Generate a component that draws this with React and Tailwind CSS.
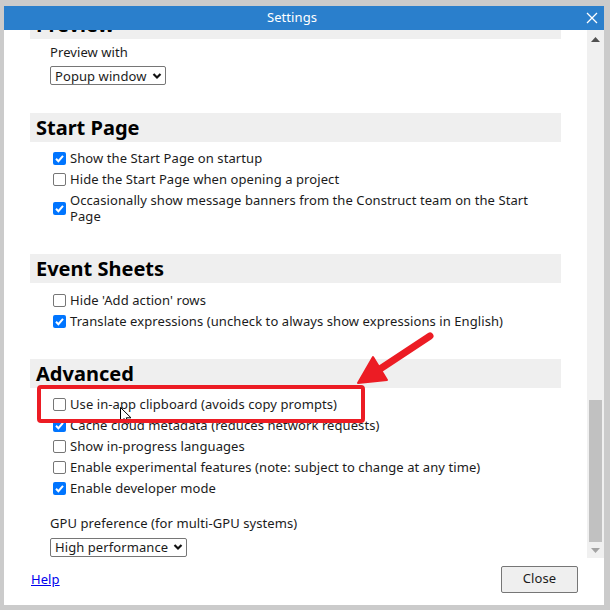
import React from "react";

const font = { fontFamily: '"Noto Sans", "Open Sans", sans-serif' };

function Box({ checked }) {
  if (checked) {
    return (
      <span className="w-[13px] h-[13px] rounded-[2px] bg-[#0075ff] flex items-center justify-center shrink-0">
        <svg width="11" height="11" viewBox="0 0 11 11">
          <path d="M2 5.8 L4.4 8.2 L9 2.8" fill="none" stroke="white" strokeWidth="2" />
        </svg>
      </span>
    );
  }
  return <span className="w-[13px] h-[13px] rounded-[2px] border border-[#767676] bg-white shrink-0" />;
}

function Item({ checked, children }) {
  return (
    <div className="flex items-center gap-[4px] pl-[23px] py-[2.5px] leading-[16px] pr-[20px]">
      <Box checked={checked} />
      <span>{children}</span>
    </div>
  );
}

function Header({ children, className }) {
  return (
    <div className={"h-[29px] bg-[#efefef] pl-[6px] flex items-center text-[20px] font-bold tracking-normal text-black " + className}>
      {children}
    </div>
  );
}

function Select({ value, width }) {
  return (
    <div
      className="ml-[20px] h-[19px] border border-[#767676] rounded-[2px] flex items-center justify-between pl-[4px] pr-[3px] bg-white"
      style={{ width }}
    >
      <span className="leading-[16px]">{value}</span>
      <svg width="10" height="10" viewBox="0 0 10 10">
        <path d="M1.5 3 L5 6.5 L8.5 3" fill="none" stroke="#111" strokeWidth="2.2" />
      </svg>
    </div>
  );
}

export default function App() {
  return (
    <div className="w-[610px] h-[610px] bg-[#cbcbcb] pt-[6px] pl-[4px] relative text-[13px] tracking-[0.08px] text-[#1b1b1b]" style={font}>
      <div className="w-[600px] h-[599px] bg-white flex flex-col">
        <div className="h-[24px] bg-[#2a7fcc] text-white flex items-center justify-center pr-[24px] relative">
          <span className="text-[13px]">Settings</span>
          <svg className="absolute right-[6px] top-[6px]" width="12" height="12" viewBox="0 0 12 12">
            <path d="M1 1 L11 11 M11 1 L1 11" stroke="white" strokeWidth="1.3" />
          </svg>
        </div>

        <div className="h-[528px] flex">
          <div className="w-[583px] overflow-hidden px-[26px]">
            <div className="mt-[-20px]">
              <Header>Preview</Header>
              <div className="mt-[4px] pl-[20px] leading-[18px]">Preview with</div>
              <div className="mt-[5px]">
                <Select value="Popup window" width="116px" />
              </div>

              <Header className="mt-[28px]">Start Page</Header>
              <div className="mt-[5.5px]">
                <Item checked>Show the Start Page on startup</Item>
                <Item>Hide the Start Page when opening a project</Item>
                <Item checked>
                  Occasionally show message banners from the Construct team on the Start Page
                </Item>
              </div>

              <Header className="mt-[27.5px]">Event Sheets</Header>
              <div className="mt-[6.5px]">
                <Item>Hide 'Add action' rows</Item>
                <Item checked>Translate expressions (uncheck to always show expressions in English)</Item>
              </div>

              <Header className="mt-[27.5px]">Advanced</Header>
              <div className="mt-[5.5px]">
                <Item>Use in-app clipboard (avoids copy prompts)</Item>
                <Item checked>Cache cloud metadata (reduces network requests)</Item>
                <Item>Show in-progress languages</Item>
                <Item>Enable experimental features (note: subject to change at any time)</Item>
                <Item checked>Enable developer mode</Item>
              </div>

              <div className="mt-[15.5px] pl-[20px] leading-[18px]">GPU preference (for multi-GPU systems)</div>
              <div className="mt-[5.5px]">
                <Select value="High performance" width="137px" />
              </div>
            </div>
          </div>

          <div className="w-[17px] bg-[#f0f0f0] flex flex-col items-center">
            <div className="h-[18px] flex items-center justify-center">
              <svg width="9" height="5" viewBox="0 0 9 5">
                <path d="M0 5 L4.5 0 L9 5 Z" fill="#505050" />
              </svg>
            </div>
            <div className="flex-1" />
            <div className="w-[13px] h-[142px] bg-[#c1c1c1]" />
            <div className="h-[16px] flex items-center justify-center">
              <svg width="9" height="5" viewBox="0 0 9 5">
                <path d="M0 0 L9 0 L4.5 5 Z" fill="#a3a3a3" />
              </svg>
            </div>
          </div>
        </div>

        <div className="h-[42px] flex items-center justify-between pl-[27px] pr-[26px]">
          <a className="text-[#0000ee] underline leading-[18px]">Help</a>
          <div className="w-[77px] h-[27px] bg-[#efefef] border border-[#767676] rounded-[2px] flex items-center justify-center">
            Close
          </div>
        </div>
      </div>

      <svg className="absolute left-[120px] top-[407px]" width="14" height="20" viewBox="0 0 14 20">
        <path d="M0.5 0.5 L0.5 15 L4 11.5 L6.5 17.5 L8.8 16.5 L6.3 10.8 L11 10.8 Z" fill="white" stroke="black" strokeWidth="1" />
      </svg>

      <div className="absolute left-[37px] top-[385px] w-[328px] h-[38px] border-[4px] border-[#ec1c24] rounded-[4px]" />

      <svg className="absolute left-[350px] top-[325px]" width="90" height="65" viewBox="0 0 90 65">
        <path d="M80 11 L30 44" stroke="#ec1c24" strokeWidth="7" strokeLinecap="round" />
        <path d="M8 58 L23 32 L37 55 Z" fill="#ec1c24" stroke="#ec1c24" strokeWidth="2" strokeLinejoin="round" />
      </svg>
    </div>
  );
}
